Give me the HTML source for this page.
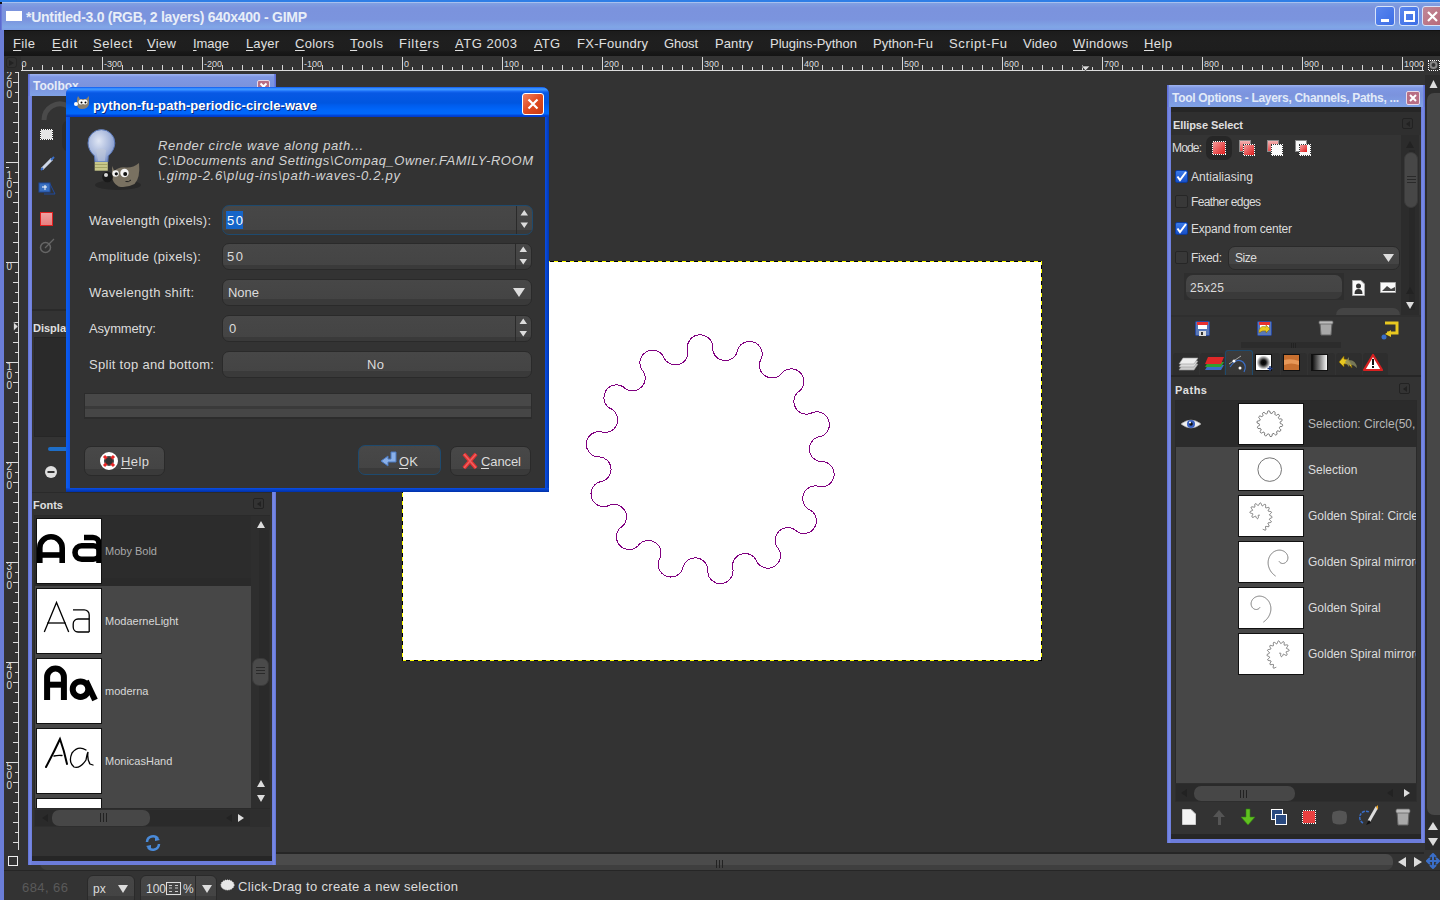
<!DOCTYPE html>
<html><head><meta charset="utf-8"><style>
html,body{margin:0;padding:0;}
body{width:1440px;height:900px;overflow:hidden;background:#333333;position:relative;font-family:"Liberation Sans", sans-serif;}
div{position:absolute;}
svg{position:absolute;}
</style></head><body>
<div style="left:0px;top:0px;width:1440px;height:2px;background:#2f7ee6"></div>
<div style="left:0px;top:2px;width:1440px;height:1px;background:#a8c0ee"></div>
<div style="left:0px;top:3px;width:1440px;height:27px;background:linear-gradient(#82a0e2 0px,#7b93dd 5px,#7b94de 17px,#80a6e6 24px,#7f9ee6 27px)"></div>
<div style="left:0px;top:2px;width:2px;height:2px;background:#111"></div>
<div style="left:0px;top:4px;width:1px;height:26px;background:#5a6ad0"></div>
<div style="left:1px;top:4px;width:1px;height:26px;background:#6a7ad8"></div>
<div style="left:6px;top:11px;width:16px;height:10px;background:#ffffff"></div>
<div id="t0" style="left:26px;top:10px;font-size:14px;line-height:14px;color:#e8eef8;white-space:pre;font-weight:bold;letter-spacing:-0.269px;">*Untitled-3.0 (RGB, 2 layers) 640x400 - GIMP</div>
<div style="left:1375px;top:6px;width:20px;height:20px;background:linear-gradient(135deg,#5a86ee,#3c6ee6);border:1px solid #d8e4fa;border-radius:3px;box-sizing:border-box"><div style="left:5px;top:12px;width:8px;height:3px;background:#fff"></div></div>
<div style="left:1399px;top:6px;width:20px;height:20px;background:linear-gradient(135deg,#5a86ee,#3c6ee6);border:1px solid #d8e4fa;border-radius:3px;box-sizing:border-box"><div style="left:4px;top:4px;width:9px;height:9px;border:2px solid #fff;border-top-width:3px;box-sizing:border-box;width:11px;height:11px"></div></div>
<div style="left:1422px;top:6px;width:22px;height:20px;background:linear-gradient(135deg,#c08898,#b86878);border:1px solid #d8e4fa;border-radius:3px;box-sizing:border-box"><svg width="20" height="20" style="position:absolute;left:0;top:0"><path d="M5 5 L14 14 M14 5 L5 14" stroke="#fff" stroke-width="2.2"/></svg></div>
<div style="left:0px;top:30px;width:4px;height:870px;background:#6b7ed8"></div>
<div style="left:4px;top:30px;width:1436px;height:1px;background:#111"></div>
<div style="left:4px;top:31px;width:1436px;height:25px;background:linear-gradient(#1c1c1c 0px,#1f1f1f 7px,#1e1e1e 19px,#181818 21px,#141414 25px)"></div>
<div id="t1" style="left:13px;top:37px;font-size:13px;line-height:13px;color:#e0e0e0;white-space:pre;letter-spacing:0.349px;"><span style="text-decoration:underline;text-underline-offset:1.5px">F</span>ile</div>
<div id="t2" style="left:52px;top:37px;font-size:13px;line-height:13px;color:#e0e0e0;white-space:pre;letter-spacing:0.865px;"><span style="text-decoration:underline;text-underline-offset:1.5px">E</span>dit</div>
<div id="t3" style="left:93px;top:37px;font-size:13px;line-height:13px;color:#e0e0e0;white-space:pre;letter-spacing:0.572px;"><span style="text-decoration:underline;text-underline-offset:1.5px">S</span>elect</div>
<div id="t4" style="left:147px;top:37px;font-size:13px;line-height:13px;color:#e0e0e0;white-space:pre;letter-spacing:0.349px;"><span style="text-decoration:underline;text-underline-offset:1.5px">V</span>iew</div>
<div id="t5" style="left:193px;top:37px;font-size:13px;line-height:13px;color:#e0e0e0;white-space:pre;letter-spacing:-0.035px;"><span style="text-decoration:underline;text-underline-offset:1.5px">I</span>mage</div>
<div id="t6" style="left:246px;top:37px;font-size:13px;line-height:13px;color:#e0e0e0;white-space:pre;letter-spacing:0.117px;"><span style="text-decoration:underline;text-underline-offset:1.5px">L</span>ayer</div>
<div id="t7" style="left:295px;top:37px;font-size:13px;line-height:13px;color:#e0e0e0;white-space:pre;letter-spacing:0.284px;"><span style="text-decoration:underline;text-underline-offset:1.5px">C</span>olors</div>
<div id="t8" style="left:350px;top:37px;font-size:13px;line-height:13px;color:#e0e0e0;white-space:pre;letter-spacing:0.660px;"><span style="text-decoration:underline;text-underline-offset:1.5px">T</span>ools</div>
<div id="t9" style="left:399px;top:37px;font-size:13px;line-height:13px;color:#e0e0e0;white-space:pre;letter-spacing:0.768px;">Filt<span style="text-decoration:underline;text-underline-offset:1.5px">e</span>rs</div>
<div id="t10" style="left:455px;top:37px;font-size:13px;line-height:13px;color:#e0e0e0;white-space:pre;letter-spacing:0.529px;"><span style="text-decoration:underline;text-underline-offset:1.5px">A</span>TG 2003</div>
<div id="t11" style="left:534px;top:37px;font-size:13px;line-height:13px;color:#e0e0e0;white-space:pre;letter-spacing:0.117px;"><span style="text-decoration:underline;text-underline-offset:1.5px">A</span>TG</div>
<div id="t12" style="left:577px;top:37px;font-size:13px;line-height:13px;color:#e0e0e0;white-space:pre;letter-spacing:0.262px;">FX-Foundry</div>
<div id="t13" style="left:664px;top:37px;font-size:13px;line-height:13px;color:#e0e0e0;white-space:pre;letter-spacing:-0.172px;">Ghost</div>
<div id="t14" style="left:715px;top:37px;font-size:13px;line-height:13px;color:#e0e0e0;white-space:pre;letter-spacing:0.084px;">Pantry</div>
<div id="t15" style="left:770px;top:37px;font-size:13px;line-height:13px;color:#e0e0e0;white-space:pre;letter-spacing:-0.035px;">Plugins-Python</div>
<div id="t16" style="left:873px;top:37px;font-size:13px;line-height:13px;color:#e0e0e0;white-space:pre;letter-spacing:0.002px;">Python-Fu</div>
<div id="t17" style="left:949px;top:37px;font-size:13px;line-height:13px;color:#e0e0e0;white-space:pre;letter-spacing:0.658px;">Script-Fu</div>
<div id="t18" style="left:1023px;top:37px;font-size:13px;line-height:13px;color:#e0e0e0;white-space:pre;letter-spacing:0.246px;">Video</div>
<div id="t19" style="left:1073px;top:37px;font-size:13px;line-height:13px;color:#e0e0e0;white-space:pre;letter-spacing:0.375px;"><span style="text-decoration:underline;text-underline-offset:1.5px">W</span>indows</div>
<div id="t20" style="left:1144px;top:37px;font-size:13px;line-height:13px;color:#e0e0e0;white-space:pre;letter-spacing:0.417px;"><span style="text-decoration:underline;text-underline-offset:1.5px">H</span>elp</div>
<div style="left:4px;top:56px;width:17px;height:16px;background:#2e2e2e"></div>
<div style="left:6px;top:57px;width:11px;height:11px;border:1px solid #262626;border-radius:3px;box-sizing:border-box;background:#313131"></div>
<svg style="position:absolute;left:8px;top:59px" width="9" height="9"><path d="M1 1 L6 4 L1 7 Z" fill="#222"/></svg>
<div style="left:21px;top:56px;width:1403px;height:16px;background:#333;overflow:hidden"></div>
<svg style="position:absolute;left:0;top:0" width="1440" height="900"><path d="M22.5 65 V70 M32.5 67 V70 M42.5 65 V70 M52.5 67 V70 M62.5 65 V70 M72.5 67 V70 M82.5 65 V70 M92.5 67 V70 M102.5 57 V70 M112.5 67 V70 M122.5 65 V70 M132.5 67 V70 M142.5 65 V70 M152.5 67 V70 M162.5 65 V70 M172.5 67 V70 M182.5 65 V70 M192.5 67 V70 M202.5 57 V70 M212.5 67 V70 M222.5 65 V70 M232.5 67 V70 M242.5 65 V70 M252.5 67 V70 M262.5 65 V70 M272.5 67 V70 M282.5 65 V70 M292.5 67 V70 M302.5 57 V70 M312.5 67 V70 M322.5 65 V70 M332.5 67 V70 M342.5 65 V70 M352.5 67 V70 M362.5 65 V70 M372.5 67 V70 M382.5 65 V70 M392.5 67 V70 M402.5 57 V70 M412.5 67 V70 M422.5 65 V70 M432.5 67 V70 M442.5 65 V70 M452.5 67 V70 M462.5 65 V70 M472.5 67 V70 M482.5 65 V70 M492.5 67 V70 M502.5 57 V70 M512.5 67 V70 M522.5 65 V70 M532.5 67 V70 M542.5 65 V70 M552.5 67 V70 M562.5 65 V70 M572.5 67 V70 M582.5 65 V70 M592.5 67 V70 M602.5 57 V70 M612.5 67 V70 M622.5 65 V70 M632.5 67 V70 M642.5 65 V70 M652.5 67 V70 M662.5 65 V70 M672.5 67 V70 M682.5 65 V70 M692.5 67 V70 M702.5 57 V70 M712.5 67 V70 M722.5 65 V70 M732.5 67 V70 M742.5 65 V70 M752.5 67 V70 M762.5 65 V70 M772.5 67 V70 M782.5 65 V70 M792.5 67 V70 M802.5 57 V70 M812.5 67 V70 M822.5 65 V70 M832.5 67 V70 M842.5 65 V70 M852.5 67 V70 M862.5 65 V70 M872.5 67 V70 M882.5 65 V70 M892.5 67 V70 M902.5 57 V70 M912.5 67 V70 M922.5 65 V70 M932.5 67 V70 M942.5 65 V70 M952.5 67 V70 M962.5 65 V70 M972.5 67 V70 M982.5 65 V70 M992.5 67 V70 M1002.5 57 V70 M1012.5 67 V70 M1022.5 65 V70 M1032.5 67 V70 M1042.5 65 V70 M1052.5 67 V70 M1062.5 65 V70 M1072.5 67 V70 M1082.5 65 V70 M1092.5 67 V70 M1102.5 57 V70 M1112.5 67 V70 M1122.5 65 V70 M1132.5 67 V70 M1142.5 65 V70 M1152.5 67 V70 M1162.5 65 V70 M1172.5 67 V70 M1182.5 65 V70 M1192.5 67 V70 M1202.5 57 V70 M1212.5 67 V70 M1222.5 65 V70 M1232.5 67 V70 M1242.5 65 V70 M1252.5 67 V70 M1262.5 65 V70 M1272.5 67 V70 M1282.5 65 V70 M1292.5 67 V70 M1302.5 57 V70 M1312.5 67 V70 M1322.5 65 V70 M1332.5 67 V70 M1342.5 65 V70 M1352.5 67 V70 M1362.5 65 V70 M1372.5 67 V70 M1382.5 65 V70 M1392.5 67 V70 M1402.5 57 V70 M1412.5 67 V70 M1422.5 65 V70" stroke="#d8d8d8" stroke-width="1"/><path d="M21 70.5 H1424" stroke="#dcdcdc" stroke-width="1"/></svg>
<div style="left:21px;top:56px;width:1403px;height:16px;overflow:hidden">
<div style="left:83px;top:3.5px;font-size:9px;line-height:9px;color:#dcdcdc;white-space:pre">-300</div>
<div style="left:183px;top:3.5px;font-size:9px;line-height:9px;color:#dcdcdc;white-space:pre">-200</div>
<div style="left:283px;top:3.5px;font-size:9px;line-height:9px;color:#dcdcdc;white-space:pre">-100</div>
<div style="left:383px;top:3.5px;font-size:9px;line-height:9px;color:#dcdcdc;white-space:pre">0</div>
<div style="left:483px;top:3.5px;font-size:9px;line-height:9px;color:#dcdcdc;white-space:pre">100</div>
<div style="left:583px;top:3.5px;font-size:9px;line-height:9px;color:#dcdcdc;white-space:pre">200</div>
<div style="left:683px;top:3.5px;font-size:9px;line-height:9px;color:#dcdcdc;white-space:pre">300</div>
<div style="left:783px;top:3.5px;font-size:9px;line-height:9px;color:#dcdcdc;white-space:pre">400</div>
<div style="left:883px;top:3.5px;font-size:9px;line-height:9px;color:#dcdcdc;white-space:pre">500</div>
<div style="left:983px;top:3.5px;font-size:9px;line-height:9px;color:#dcdcdc;white-space:pre">600</div>
<div style="left:1083px;top:3.5px;font-size:9px;line-height:9px;color:#dcdcdc;white-space:pre">700</div>
<div style="left:1183px;top:3.5px;font-size:9px;line-height:9px;color:#dcdcdc;white-space:pre">800</div>
<div style="left:1283px;top:3.5px;font-size:9px;line-height:9px;color:#dcdcdc;white-space:pre">900</div>
<div style="left:1383px;top:3.5px;font-size:9px;line-height:9px;color:#dcdcdc;white-space:pre">1000</div>
<div style="left:0.6px;top:3.5px;font-size:9px;line-height:9px;color:#dcdcdc;white-space:pre">0</div>
</div>
<div style="left:4px;top:72px;width:17px;height:778px;background:#333"></div>
<svg style="position:absolute;left:0;top:0" width="40" height="900"><path d="M15 72.5 H18 M13 82.5 H18 M15 92.5 H18 M13 102.5 H18 M15 112.5 H18 M13 122.5 H18 M15 132.5 H18 M13 142.5 H18 M15 152.5 H18 M6 162.5 H18 M15 172.5 H18 M13 182.5 H18 M15 192.5 H18 M13 202.5 H18 M15 212.5 H18 M13 222.5 H18 M15 232.5 H18 M13 242.5 H18 M15 252.5 H18 M6 262.5 H18 M15 272.5 H18 M13 282.5 H18 M15 292.5 H18 M13 302.5 H18 M15 312.5 H18 M13 322.5 H18 M15 332.5 H18 M13 342.5 H18 M15 352.5 H18 M6 362.5 H18 M15 372.5 H18 M13 382.5 H18 M15 392.5 H18 M13 402.5 H18 M15 412.5 H18 M13 422.5 H18 M15 432.5 H18 M13 442.5 H18 M15 452.5 H18 M6 462.5 H18 M15 472.5 H18 M13 482.5 H18 M15 492.5 H18 M13 502.5 H18 M15 512.5 H18 M13 522.5 H18 M15 532.5 H18 M13 542.5 H18 M15 552.5 H18 M6 562.5 H18 M15 572.5 H18 M13 582.5 H18 M15 592.5 H18 M13 602.5 H18 M15 612.5 H18 M13 622.5 H18 M15 632.5 H18 M13 642.5 H18 M15 652.5 H18 M6 662.5 H18 M15 672.5 H18 M13 682.5 H18 M15 692.5 H18 M13 702.5 H18 M15 712.5 H18 M13 722.5 H18 M15 732.5 H18 M13 742.5 H18 M15 752.5 H18 M6 762.5 H18 M15 772.5 H18 M13 782.5 H18 M15 792.5 H18 M13 802.5 H18 M15 812.5 H18 M13 822.5 H18 M15 832.5 H18 M13 842.5 H18" stroke="#dcdcdc" stroke-width="1"/><path d="M18.5 72 V850" stroke="#dcdcdc" stroke-width="1"/></svg>
<div style="left:4px;top:72px;width:17px;height:778px;overflow:hidden">
<div style="left:2px;top:-5px;width:3px;height:1px;background:#dcdcdc"></div>
<div style="left:2.6px;top:-1.37px;font-size:10px;line-height:10px;color:#dcdcdc">2</div>
<div style="left:2.6px;top:8.13px;font-size:10px;line-height:10px;color:#dcdcdc">0</div>
<div style="left:2.6px;top:17.63px;font-size:10px;line-height:10px;color:#dcdcdc">0</div>
<div style="left:2px;top:95px;width:3px;height:1px;background:#dcdcdc"></div>
<div style="left:2.6px;top:98.63px;font-size:10px;line-height:10px;color:#dcdcdc">1</div>
<div style="left:2.6px;top:108.13px;font-size:10px;line-height:10px;color:#dcdcdc">0</div>
<div style="left:2.6px;top:117.63px;font-size:10px;line-height:10px;color:#dcdcdc">0</div>
<div style="left:2.6px;top:189.63px;font-size:10px;line-height:10px;color:#dcdcdc">0</div>
<div style="left:2.6px;top:289.63px;font-size:10px;line-height:10px;color:#dcdcdc">1</div>
<div style="left:2.6px;top:299.13px;font-size:10px;line-height:10px;color:#dcdcdc">0</div>
<div style="left:2.6px;top:308.63px;font-size:10px;line-height:10px;color:#dcdcdc">0</div>
<div style="left:2.6px;top:389.63px;font-size:10px;line-height:10px;color:#dcdcdc">2</div>
<div style="left:2.6px;top:399.13px;font-size:10px;line-height:10px;color:#dcdcdc">0</div>
<div style="left:2.6px;top:408.63px;font-size:10px;line-height:10px;color:#dcdcdc">0</div>
<div style="left:2.6px;top:489.63px;font-size:10px;line-height:10px;color:#dcdcdc">3</div>
<div style="left:2.6px;top:499.13px;font-size:10px;line-height:10px;color:#dcdcdc">0</div>
<div style="left:2.6px;top:508.63px;font-size:10px;line-height:10px;color:#dcdcdc">0</div>
<div style="left:2.6px;top:589.63px;font-size:10px;line-height:10px;color:#dcdcdc">4</div>
<div style="left:2.6px;top:599.13px;font-size:10px;line-height:10px;color:#dcdcdc">0</div>
<div style="left:2.6px;top:608.63px;font-size:10px;line-height:10px;color:#dcdcdc">0</div>
<div style="left:2.6px;top:689.63px;font-size:10px;line-height:10px;color:#dcdcdc">5</div>
<div style="left:2.6px;top:699.13px;font-size:10px;line-height:10px;color:#dcdcdc">0</div>
<div style="left:2.6px;top:708.63px;font-size:10px;line-height:10px;color:#dcdcdc">0</div>
</div>
<svg style="position:absolute;left:1079px;top:64px" width="14" height="8"><path d="M2.5 2 L11 2 L6.5 6.8Z" fill="#dcdcdc" stroke="#222" stroke-width="0.6"/></svg>
<svg style="position:absolute;left:11px;top:320px" width="9" height="14"><path d="M2.5 2 L7.2 6.5 L2.5 11Z" fill="#dcdcdc" stroke="#222" stroke-width="0.6"/></svg>
<div style="left:402px;top:261px;width:640px;height:400px;background:#fff"></div>
<div style="left:402px;top:261px;width:640px;height:1px;background:repeating-linear-gradient(90deg,#ffff00 0 4px,#000 4px 8px)"></div>
<div style="left:402px;top:660px;width:640px;height:1px;background:repeating-linear-gradient(90deg,#ffff00 0 4px,#000 4px 8px)"></div>
<div style="left:402px;top:261px;width:1px;height:400px;background:repeating-linear-gradient(180deg,#ffff00 0 4px,#000 4px 8px)"></div>
<div style="left:1041px;top:261px;width:1px;height:400px;background:repeating-linear-gradient(180deg,#ffff00 0 4px,#000 4px 8px)"></div>
<svg style="position:absolute;left:0;top:0" width="1440" height="900"><path d="M687.42 348.52 A12.65 12.65 0 0 1 712.62 346.23 A12.65 12.65 0 0 0 737.70 349.60 A12.65 12.65 0 0 1 761.40 358.47 A12.65 12.65 0 0 0 782.53 372.38 A12.65 12.65 0 0 1 800.04 390.66 A12.65 12.65 0 0 0 813.04 412.37 A12.65 12.65 0 0 1 820.88 436.42 A12.65 12.65 0 0 0 823.17 461.62 A12.65 12.65 0 0 1 819.80 486.70 A12.65 12.65 0 0 0 810.93 510.40 A12.65 12.65 0 0 1 797.02 531.53 A12.65 12.65 0 0 0 778.74 549.04 A12.65 12.65 0 0 1 757.03 562.04 A12.65 12.65 0 0 0 732.98 569.88 A12.65 12.65 0 0 1 707.78 572.17 A12.65 12.65 0 0 0 682.70 568.80 A12.65 12.65 0 0 1 659.00 559.93 A12.65 12.65 0 0 0 637.87 546.02 A12.65 12.65 0 0 1 620.36 527.74 A12.65 12.65 0 0 0 607.36 506.03 A12.65 12.65 0 0 1 599.52 481.98 A12.65 12.65 0 0 0 597.23 456.78 A12.65 12.65 0 0 1 600.60 431.70 A12.65 12.65 0 0 0 609.47 408.00 A12.65 12.65 0 0 1 623.38 386.87 A12.65 12.65 0 0 0 641.66 369.36 A12.65 12.65 0 0 1 663.37 356.36 A12.65 12.65 0 0 0 687.42 348.52 Z" fill="none" stroke="#800080" stroke-width="1" shape-rendering="crispEdges"/></svg>
<div style="left:1424px;top:56px;width:16px;height:16px;background:#333"></div>
<svg style="position:absolute;left:1427px;top:59px" width="13" height="12"><rect x="1" y="1" width="11" height="10" fill="none" stroke="#fff" stroke-dasharray="1 1" shape-rendering="crispEdges"/><circle cx="6.5" cy="6" r="3" fill="none" stroke="#888" stroke-width="2"/></svg>
<div style="left:1425px;top:72px;width:15px;height:780px;background:#333"></div>
<div style="left:1425px;top:75px;width:15px;height:775px;background:#2c2c2c"></div>
<svg style="position:absolute;left:1427px;top:78px" width="13" height="12"><path d="M2.5 10 L6.5 2 L10.5 10Z" fill="#ddd"/></svg>
<div style="left:1427px;top:93px;width:13px;height:722px;background:#474747;border-radius:7px 0 0 7px"></div>
<svg style="position:absolute;left:1426px;top:820px" width="14" height="30"><path d="M2 10 L7 2 L12 10Z M2 18 L12 18 L7 26Z" fill="#ddd"/></svg>
<div style="left:40px;top:852px;width:1384px;height:2px;background:#262626"></div>
<div style="left:40px;top:854px;width:1353px;height:16px;background:linear-gradient(#4b4b4b 0,#4b4b4b 11px,#3f3f3f 11px);border-radius:7px"></div>
<div style="left:4px;top:870px;width:1436px;height:1px;background:#262626"></div>
<svg style="position:absolute;left:1396px;top:855px" width="30" height="14"><path d="M10 2 L2 7 L10 12Z M18 2 L26 7 L18 12Z" fill="#ddd"/></svg>
<svg style="position:absolute;left:1426px;top:853px" width="14" height="16"><path d="M7 1 L7 15 M1 8 L13 8 M4 4 L7 1 L10 4 M4 12 L7 15 L10 12 M4 5 L1 8 L4 11 M10 5 L13 8 L10 11" stroke="#3a6ec8" stroke-width="2" fill="none"/></svg>
<div style="left:716px;top:860px;width:1px;height:8px;background:#222"></div>
<div style="left:719px;top:860px;width:1px;height:8px;background:#222"></div>
<div style="left:722px;top:860px;width:1px;height:8px;background:#222"></div>
<svg style="position:absolute;left:6px;top:854px" width="14" height="14"><rect x="2.5" y="2.5" width="9" height="9" fill="none" stroke="#eee" stroke-width="1"/></svg>
<div id="t21" style="left:22px;top:881px;font-size:13px;line-height:13px;color:#5a5a5a;white-space:pre;letter-spacing:0.438px;">684, 66</div>
<div style="left:87px;top:875px;width:48px;height:30px;background:linear-gradient(#464646 0,#444 70%,#3a3a3a 70%);border-radius:6px;border:1px solid #2a2a2a;box-sizing:border-box"></div>
<div id="t22" style="left:93px;top:883px;font-size:12px;line-height:12px;color:#dcdcdc;white-space:pre;">px</div>
<svg style="position:absolute;left:117px;top:884px" width="12" height="10"><path d="M1 1 L11 1 L6 9Z" fill="#ddd"/></svg>
<div style="left:140px;top:875px;width:77px;height:30px;background:linear-gradient(#464646 0,#444 70%,#3a3a3a 70%);border-radius:6px;border:1px solid #2a2a2a;box-sizing:border-box"></div>
<div style="left:195px;top:876px;width:1px;height:24px;background:#2a2a2a"></div>
<div id="t23" style="left:146px;top:883px;font-size:12px;line-height:12px;color:#dcdcdc;white-space:pre;">100</div>
<div style="left:166px;top:882px;width:15px;height:13px;border:1px solid #ddd;box-sizing:border-box"></div>
<svg style="position:absolute;left:166px;top:882px" width="15" height="13"><path d="M3 3.5 H6 M3 6 H6 M9 3.5 H12 M3 9.5 H6 M9 9.5 H12 M9 6 H12" stroke="#ccc" stroke-width="1.2"/></svg>
<div id="t24" style="left:183px;top:883px;font-size:12px;line-height:12px;color:#dcdcdc;white-space:pre;">%</div>
<svg style="position:absolute;left:201px;top:884px" width="12" height="10"><path d="M1 1 L11 1 L6 9Z" fill="#ddd"/></svg>
<svg style="position:absolute;left:220px;top:879px" width="16" height="13"><ellipse cx="7.5" cy="6" rx="6.5" ry="5" fill="#e8e8e8" stroke="#fff" stroke-dasharray="1 1"/></svg>
<div id="t25" style="left:238px;top:880px;font-size:13px;line-height:13px;color:#dcdcdc;white-space:pre;letter-spacing:0.340px;">Click-Drag to create a new selection</div>
<div style="left:28px;top:74px;width:248px;height:791px;background:linear-gradient(90deg,#5f70d6 0,#7a8ce6 2px,#6c7cda 4px,#6c7cda 244px,#7a8ce6 246px,#5f70d6 248px)"></div>
<div style="left:28px;top:74px;width:248px;height:22px;background:linear-gradient(#9fb4f0 0,#7f98e4 3px,#7b93dd 12px,#80a2e6 22px)"></div>
<div style="left:28px;top:74px;width:2px;height:22px;background:linear-gradient(90deg,#5a68d6,#7288e2)"></div>
<div style="left:274px;top:74px;width:2px;height:22px;background:linear-gradient(90deg,#7288e2,#5a68d6)"></div>
<div id="t26" style="left:33px;top:80px;font-size:12px;line-height:12px;color:#e6ecf8;white-space:pre;font-weight:bold;">Toolbox</div>
<div style="left:257px;top:80px;width:13px;height:13px;background:#b86e84;border:1px solid #e8dce8;border-radius:2px;box-sizing:border-box"><svg width="11" height="11" style="position:absolute;left:0;top:0"><path d="M2.5 2.5 L8.5 8.5 M8.5 2.5 L2.5 8.5" stroke="#fff" stroke-width="2"/></svg></div>
<div style="left:32px;top:96px;width:240px;height:765px;background:#333"></div>
<svg style="position:absolute;left:32px;top:96px" width="40" height="40"><path d="M12 24 A 16 16 0 0 1 36 10" stroke="#4a4a4a" stroke-width="5" fill="none"/></svg>
<div style="left:62px;top:120px;width:8px;height:32px;background:#2c2c2c;border-radius:8px 0 0 8px"></div>
<svg style="position:absolute;left:38px;top:128px" width="18" height="15"><rect x="2.5" y="1.5" width="12" height="10" fill="#e4e4e4" stroke="#333"/><rect x="2.5" y="1.5" width="12" height="10" fill="none" stroke="#fff" stroke-dasharray="1 1" shape-rendering="crispEdges"/></svg>
<svg style="position:absolute;left:40px;top:155px" width="16" height="16"><path d="M2 14 L12 4" stroke="#cfd8e8" stroke-width="3"/><path d="M11 5 L14 2" stroke="#3a6ec8" stroke-width="2"/><path d="M1 15 L3 13" stroke="#3a6ec8" stroke-width="2"/></svg>
<svg style="position:absolute;left:38px;top:181px" width="18" height="16"><rect x="1" y="2" width="11" height="9" fill="#3a70c0" stroke="#1e4aa0"/><path d="M12 3 L17 13 L6 13" stroke="#1e4aa0" fill="none"/><path d="M4 6 H9 M7 4 V9" stroke="#fff"/></svg>
<div style="left:40px;top:212px;width:13px;height:14px;background:linear-gradient(#f0a0a0,#e88080);border:1px solid #e02020;box-sizing:border-box"></div>
<svg style="position:absolute;left:39px;top:238px" width="16" height="16"><circle cx="6.5" cy="9.5" r="5" stroke="#666" stroke-width="1.5" fill="none"/><path d="M6 10 L15 1" stroke="#666" stroke-width="1.2"/></svg>
<div style="left:32px;top:309px;width:240px;height:2px;background:#2a2a2a"></div>
<div id="t27" style="left:33px;top:323px;font-size:11px;line-height:11px;color:#e0e0e0;white-space:pre;font-weight:bold;">Display</div>
<div style="left:34px;top:337px;width:240px;height:100px;background:#2a2a2a;border:1px solid #262626;box-sizing:border-box"></div>
<div style="left:48px;top:447px;width:30px;height:4px;background:#1e6ec8;border-radius:2px"></div>
<svg style="position:absolute;left:44px;top:465px" width="14" height="14"><circle cx="7" cy="7" r="6" fill="#e0e0e0"/><path d="M3.5 7 H10.5" stroke="#333" stroke-width="2"/></svg>
<div style="left:32px;top:492px;width:240px;height:1px;background:#2a2a2a"></div>
<div id="t28" style="left:33px;top:500px;font-size:11px;line-height:11px;color:#e0e0e0;white-space:pre;font-weight:bold;">Fonts</div>
<div style="left:253px;top:498px;width:11px;height:11px;border:1px solid #222;border-radius:2px;box-sizing:border-box"></div>
<svg style="position:absolute;left:255px;top:500px" width="8" height="8"><path d="M6 1 L2 4 L6 7Z" fill="#222"/></svg>
<div style="left:34px;top:515px;width:236px;height:294px;background:#2a2a2a"></div>
<div style="left:35px;top:516px;width:216px;height:292px;background:#474747;overflow:hidden"></div>
<div style="left:35px;top:516px;width:216px;height:62px;background:#2c2c2c"></div>
<div style="left:35px;top:578px;width:216px;height:8px;background:#2a2a2a"></div>
<div style="left:251px;top:516px;width:19px;height:292px;background:#2e2e2e"></div>
<div style="left:259px;top:530px;width:10px;height:250px;background:#2a2a2a"></div>
<svg style="position:absolute;left:254px;top:518px" width="14" height="290"><path d="M3 10 L7 3 L11 10Z M3 269 L7 262 L11 269Z M3 277 L11 277 L7 284Z" fill="#ddd"/></svg>
<div style="left:252px;top:658px;width:17px;height:28px;background:#4a4a4a;border-radius:7px;border:1px solid #3a3a3a;box-sizing:border-box"></div>
<div style="left:256px;top:667px;width:9px;height:1px;background:#2a2a2a"></div>
<div style="left:256px;top:670px;width:9px;height:1px;background:#2a2a2a"></div>
<div style="left:256px;top:673px;width:9px;height:1px;background:#2a2a2a"></div>
<div style="left:35px;top:516px;width:216px;height:292px;overflow:hidden">
<div style="left:1px;top:2px;width:66px;height:66px;background:#fff;box-sizing:border-box;border:1px solid #111"></div>
<div style="left:70px;top:29px;font-size:11px;line-height:12px;color:#a8a8a8;white-space:pre">Moby Bold</div>
<div style="left:1px;top:72px;width:66px;height:66px;background:#fff;box-sizing:border-box;border:1px solid #111"></div>
<div style="left:70px;top:99px;font-size:11px;line-height:12px;color:#d8d8d8;white-space:pre">ModaerneLight</div>
<div style="left:1px;top:142px;width:66px;height:66px;background:#fff;box-sizing:border-box;border:1px solid #111"></div>
<div style="left:70px;top:169px;font-size:11px;line-height:12px;color:#d8d8d8;white-space:pre">moderna</div>
<div style="left:1px;top:212px;width:66px;height:66px;background:#fff;box-sizing:border-box;border:1px solid #111"></div>
<div style="left:70px;top:239px;font-size:11px;line-height:12px;color:#d8d8d8;white-space:pre">MonicasHand</div>
<div style="left:1px;top:282px;width:66px;height:66px;background:#fff;box-sizing:border-box;border:1px solid #111"></div>
</div>
<svg style="position:absolute;left:0;top:0" width="110" height="810">
<defs><clipPath id="fc1"><rect x="36" y="519" width="65" height="64"/></clipPath></defs>
<g clip-path="url(#fc1)" fill="none" stroke="#000" stroke-width="5.6">
<path d="M39.8 563 V548 A11.2 11.2 0 0 1 62.2 548 V563"/><path d="M39.8 555 H62.2"/>
<path d="M84 537.5 H93 A6 6 0 0 1 99 543.5 V563"/><rect x="75" y="545.8" width="25" height="13.4" rx="6.7"/>
</g>
<g fill="none" stroke="#000" stroke-width="1.3">
<path d="M44.3 632 L56.5 602.5 L68.7 632"/><path d="M47.3 623 H65.6"/>
<path d="M73 609.8 H84 A5 5 0 0 1 89.2 615 V632"/><path d="M89.2 619 H78 A5 5 0 0 0 73.2 624 V627 A5 5 0 0 0 78 632 H89.2"/>
</g>
<g fill="none" stroke="#000" stroke-width="6">
<path d="M47.1 700 V677 A8.4 8.4 0 0 1 63.9 677 V700"/><path d="M47.1 684.7 H63.9"/>
<circle cx="80.5" cy="689.2" r="7.8"/><path d="M86 681 L95 700"/>
</g>
<g fill="none" stroke="#000" stroke-width="1.3" stroke-linecap="round">
<path d="M46 767 Q54 752 60 739 Q64 750 67 764" stroke-width="2"/><path d="M54 756 Q58 755 62 755.5"/>
<path d="M86 750 Q78 745 72 753 Q68 762 74 767 Q80 769 86 760 Q87 754 88 752 Q87 760 90 764 L93 765"/>
</g>
</svg>
<div style="left:34px;top:809px;width:236px;height:18px;background:#2e2e2e"></div>
<div style="left:35px;top:810px;width:215px;height:16px;background:#2a2a2a"></div>
<div style="left:52px;top:810px;width:98px;height:16px;background:#474747;border-radius:7px"></div>
<div style="left:100px;top:813px;width:1px;height:9px;background:#222"></div>
<div style="left:103px;top:813px;width:1px;height:9px;background:#222"></div>
<div style="left:106px;top:813px;width:1px;height:9px;background:#222"></div>
<svg style="position:absolute;left:38px;top:812px" width="210" height="12"><path d="M200 2 L206 6 L200 10Z" fill="#ddd"/><path d="M10 2 L4 6 L10 10Z M194 2 L188 6 L194 10Z" fill="#222"/></svg>
<div style="left:32px;top:827px;width:240px;height:30px;background:#333"></div>
<svg style="position:absolute;left:144px;top:834px" width="18" height="18"><path d="M3 8 A6 6 0 0 1 14 5" stroke="#4a8ad8" stroke-width="2.5" fill="none"/><path d="M15 10 A6 6 0 0 1 4 13" stroke="#4a8ad8" stroke-width="2.5" fill="none"/><path d="M11 2 L16 6 L11 7Z M7 16 L2 12 L7 11Z" fill="#4a8ad8"/></svg>
<div style="left:32px;top:856px;width:240px;height:5px;background:#262626"></div>
<div style="left:66px;top:87px;width:483px;height:405px;background:#0846dc;border-radius:7px 7px 0 0"></div>
<div style="left:66px;top:87px;width:483px;height:30px;background:linear-gradient(#0a4ee8 0,#2a84ff 1px,#3d95ff 2px,#3a92ff 3px,#1c70f8 4px,#0858e4 6px,#0056e0 16px,#005cec 18px,#0066fa 23px,#0068fc 27px,#0048dc 28px,#0038c8 30px);border-radius:7px 7px 0 0"></div>
<div style="left:66px;top:117px;width:4px;height:375px;background:linear-gradient(90deg,#0a5ef0,#0a4ee4)"></div>
<div style="left:545px;top:117px;width:4px;height:375px;background:linear-gradient(90deg,#0a4ee4,#0036b0)"></div>
<div style="left:66px;top:488px;width:483px;height:4px;background:linear-gradient(#0a4ee4,#0030a8)"></div>
<svg style="position:absolute;left:73px;top:95px" width="18" height="15"><path d="M4 4 L5 1 L7 4 L13 4 L16 1 L16 9 Q15 14 9 14 Q4 14 4 9Z" fill="#8a8070"/><circle cx="8" cy="7" r="2.5" fill="#fff"/><circle cx="12" cy="7" r="2.5" fill="#fff"/><circle cx="8.5" cy="7.5" r="1" fill="#000"/><circle cx="12.5" cy="7.5" r="1" fill="#000"/><circle cx="3" cy="9" r="2" fill="#fff"/></svg>
<div id="t29" style="left:93px;top:99px;font-size:13px;line-height:13px;color:#ffffff;white-space:pre;font-weight:bold;letter-spacing:0.087px;text-shadow:1px 1px 0 #0a2a80;">python-fu-path-periodic-circle-wave</div>
<div style="left:522px;top:93px;width:22px;height:22px;background:linear-gradient(135deg,#f08060,#e04a20 50%,#c83a10);border:1px solid #fff;border-radius:3px;box-sizing:border-box"><svg width="20" height="20" style="position:absolute;left:0;top:0"><path d="M5.5 5.5 L14.5 14.5 M14.5 5.5 L5.5 14.5" stroke="#fff" stroke-width="2.2"/></svg></div>
<div style="left:70px;top:117px;width:475px;height:371px;background:#333"></div>
<svg style="position:absolute;left:84px;top:128px" width="64" height="64">
<defs><radialGradient id="bg1" cx="0.4" cy="0.35" r="0.7"><stop offset="0" stop-color="#dfe6f4"/><stop offset="0.6" stop-color="#a8b8dc"/><stop offset="1" stop-color="#7890c8"/></radialGradient></defs>
<ellipse cx="34" cy="57" rx="23" ry="5" fill="#282828"/>
<path d="M10.5 28 Q4 22 4 15 A13.4 13.4 0 1 1 30.8 15 Q30.8 22 24.2 28 L23.8 34 L11 34 Z" fill="url(#bg1)" stroke="#5a78b8" stroke-width="1"/>
<path d="M12 22 Q17 19 22 22 L21 33 H14Z" fill="#c0c8d8" opacity="0.6"/>
<rect x="10.7" y="34" width="13.1" height="8.7" fill="#c8c88a"/><path d="M11 36.5 H23.5 M11 39.5 H23.5" stroke="#9a9a60" stroke-width="0.8"/>
<path d="M28 38 L30.5 43 Q35 38.5 42 39.5 Q49 40 55 35 Q56.5 50 50.5 56 Q42 60.5 34.5 58.5 Q28 55 28 47 Z" fill="#797161"/>
<circle cx="23.5" cy="49" r="5.3" fill="#1a1a1a"/><circle cx="22" cy="47" r="2" fill="#d8d8d8"/>
<circle cx="31.6" cy="45.5" r="3.2" fill="#f4f4f4"/><circle cx="32.3" cy="45.8" r="1.6" fill="#111"/>
<circle cx="40.5" cy="45" r="4.2" fill="#f4f4f4"/><circle cx="41.2" cy="46" r="2" fill="#111"/>
<path d="M41.5 53.5 Q44.5 54.5 47 52" stroke="#222" stroke-width="1" fill="none"/>
</svg>
<div id="t30" style="left:158px;top:139px;font-size:13px;line-height:13px;color:#d4d4d4;white-space:pre;font-style:italic;letter-spacing:0.622px;">Render circle wave along path...</div>
<div id="t31" style="left:158px;top:154px;font-size:13px;line-height:13px;color:#d4d4d4;white-space:pre;font-style:italic;letter-spacing:0.546px;">C:\Documents and Settings\Compaq_Owner.FAMILY-ROOM</div>
<div id="t32" style="left:158px;top:169px;font-size:13px;line-height:13px;color:#d4d4d4;white-space:pre;font-style:italic;letter-spacing:0.701px;">\.gimp-2.6\plug-ins\path-waves-0.2.py</div>
<div id="t33" style="left:89px;top:214px;font-size:13px;line-height:13px;color:#dcdcdc;white-space:pre;letter-spacing:0.248px;">Wavelength (pixels):</div>
<div id="t34" style="left:89px;top:250px;font-size:13px;line-height:13px;color:#dcdcdc;white-space:pre;letter-spacing:0.281px;">Amplitude (pixels):</div>
<div id="t35" style="left:89px;top:286px;font-size:13px;line-height:13px;color:#dcdcdc;white-space:pre;letter-spacing:0.360px;">Wavelength shift:</div>
<div id="t36" style="left:89px;top:322px;font-size:13px;line-height:13px;color:#dcdcdc;white-space:pre;letter-spacing:-0.181px;">Asymmetry:</div>
<div id="t37" style="left:89px;top:358px;font-size:13px;line-height:13px;color:#dcdcdc;white-space:pre;letter-spacing:0.287px;">Split top and bottom:</div>
<div style="left:222px;top:205px;width:311px;height:30px;background:linear-gradient(#474747 0,#444 24px,#3a3a3a 24px);border:1px solid #1e4a6e;border-radius:7px;box-sizing:border-box"></div>
<div style="left:516px;top:206px;width:1px;height:28px;background:#2a2a2a"></div>
<svg style="position:absolute;left:518px;top:205px" width="12" height="30"><path d="M2.5 10.5 L6.25 5.0 L10 10.5Z M2.5 17.5 L10 17.5 L6.25 23.0Z" fill="#ddd"/></svg>
<div style="left:226px;top:211px;width:17px;height:18px;background:#1565c8"></div>
<div id="t38" style="left:227px;top:214px;font-size:13px;line-height:13px;color:#ffffff;white-space:pre;letter-spacing:1.531px;">50</div>
<div style="left:222px;top:243px;width:310px;height:27px;background:linear-gradient(#474747 0,#444 21px,#3a3a3a 21px);border:1px solid #2a2a2a;border-radius:7px;box-sizing:border-box"></div>
<div style="left:515px;top:244px;width:1px;height:25px;background:#2a2a2a"></div>
<svg style="position:absolute;left:517px;top:243px" width="12" height="27"><path d="M2.5 9.0 L6.25 3.5 L10 9.0Z M2.5 16.0 L10 16.0 L6.25 21.5Z" fill="#ddd"/></svg>
<div id="t39" style="left:227px;top:250px;font-size:13px;line-height:13px;color:#dcdcdc;white-space:pre;letter-spacing:1.531px;">50</div>
<div style="left:222px;top:279px;width:310px;height:27px;background:linear-gradient(#474747 0,#444 19px,#3a3a3a 19px);border:1px solid #2a2a2a;border-radius:7px;box-sizing:border-box"></div>
<div id="t40" style="left:228px;top:286px;font-size:13px;line-height:13px;color:#dcdcdc;white-space:pre;letter-spacing:-0.026px;">None</div>
<svg style="position:absolute;left:512px;top:287px" width="14" height="12"><path d="M1 1 L13 1 L7 10Z" fill="#ddd"/></svg>
<div style="left:222px;top:315px;width:310px;height:27px;background:linear-gradient(#474747 0,#444 21px,#3a3a3a 21px);border:1px solid #2a2a2a;border-radius:7px;box-sizing:border-box"></div>
<div style="left:515px;top:316px;width:1px;height:25px;background:#2a2a2a"></div>
<svg style="position:absolute;left:517px;top:315px" width="12" height="27"><path d="M2.5 9.0 L6.25 3.5 L10 9.0Z M2.5 16.0 L10 16.0 L6.25 21.5Z" fill="#ddd"/></svg>
<div id="t41" style="left:229px;top:322px;font-size:13px;line-height:13px;color:#dcdcdc;white-space:pre;letter-spacing:0.766px;">0</div>
<div style="left:222px;top:351px;width:310px;height:27px;background:linear-gradient(#474747 0,#444 19px,#3a3a3a 19px);border:1px solid #2a2a2a;border-radius:7px;box-sizing:border-box"></div>
<div id="t42" style="left:367px;top:358px;font-size:13px;line-height:13px;color:#dcdcdc;white-space:pre;letter-spacing:0.375px;">No</div>
<div style="left:84px;top:393px;width:448px;height:26px;background:#2c2c2c"></div>
<div style="left:85px;top:394px;width:446px;height:12px;background:#484848"></div>
<div style="left:85px;top:406px;width:446px;height:3px;background:#3a3a3a"></div>
<div style="left:85px;top:409px;width:446px;height:8px;background:#464646"></div>
<div style="left:84px;top:446px;width:81px;height:30px;background:linear-gradient(#484848 0,#444 22px,#3a3a3a 22px);border:1px solid #2a2a2a;border-radius:7px;box-sizing:border-box"></div>
<svg style="position:absolute;left:99px;top:451px" width="20" height="20"><circle cx="10" cy="10" r="7" fill="none" stroke="#fff" stroke-width="4"/><path d="M5 5 L8 8 M15 5 L12 8 M5 15 L8 12 M15 15 L12 12" stroke="#e82828" stroke-width="3"/><circle cx="10" cy="10" r="3.5" fill="#333"/></svg>
<div id="t43" style="left:121px;top:455px;font-size:13px;line-height:13px;color:#dcdcdc;white-space:pre;letter-spacing:0.417px;">Help</div>
<div style="left:121px;top:468px;width:11px;height:1px;background:#dcdcdc"></div>
<div style="left:358px;top:445px;width:83px;height:30px;background:linear-gradient(#484848 0,#444 22px,#3a3a3a 22px);border:1px solid #1e4a6e;border-radius:7px;box-sizing:border-box"></div>
<svg style="position:absolute;left:379px;top:450px" width="20" height="20"><path d="M12 2 H17 V12 H9 V16 L2 11 L9 6 V9 H12Z" fill="#8ab0e8" stroke="#4a78c0" stroke-width="1"/></svg>
<div id="t44" style="left:399px;top:455px;font-size:13px;line-height:13px;color:#dcdcdc;white-space:pre;letter-spacing:0.203px;">OK</div>
<div style="left:399px;top:468px;width:9px;height:1px;background:#dcdcdc"></div>
<div style="left:450px;top:446px;width:81px;height:30px;background:linear-gradient(#484848 0,#444 22px,#3a3a3a 22px);border:1px solid #2a2a2a;border-radius:7px;box-sizing:border-box"></div>
<svg style="position:absolute;left:461px;top:451px" width="18" height="20"><path d="M3 3 L15 17 M15 3 L3 17" stroke="#e03030" stroke-width="4"/><path d="M3 3 L15 17 M15 3 L3 17" stroke="#f06060" stroke-width="1.5"/></svg>
<div id="t45" style="left:481px;top:455px;font-size:13px;line-height:13px;color:#dcdcdc;white-space:pre;letter-spacing:-0.094px;">Cancel</div>
<div style="left:481px;top:468px;width:8px;height:1px;background:#dcdcdc"></div>
<div style="left:1167px;top:85px;width:258px;height:758px;background:linear-gradient(90deg,#5f70d6 0,#7a8ce6 2px,#6c7cda 4px,#6c7cda 254px,#7a8ce6 256px,#5f70d6 258px)"></div>
<div style="left:1167px;top:85px;width:258px;height:22px;background:linear-gradient(#9fb4f0 0,#7f98e4 3px,#7b93dd 10px,#80a2e6 22px)"></div>
<div style="left:1167px;top:85px;width:2px;height:22px;background:linear-gradient(90deg,#5a68d6,#7288e2)"></div>
<div style="left:1423px;top:85px;width:2px;height:22px;background:linear-gradient(90deg,#7288e2,#5a68d6)"></div>
<div id="t46" style="left:1172px;top:92px;font-size:12px;line-height:12px;color:#e2eaf8;white-space:pre;font-weight:bold;letter-spacing:-0.289px;">Tool Options - Layers, Channels, Paths, ...</div>
<div style="left:1406px;top:91px;width:14px;height:14px;background:#b86e84;border:1px solid #e8dce8;border-radius:2px;box-sizing:border-box"><svg width="12" height="12" style="position:absolute;left:0;top:0"><path d="M3 3 L9 9 M9 3 L3 9" stroke="#fff" stroke-width="2"/></svg></div>
<div style="left:1171px;top:107px;width:250px;height:732px;background:#333"></div>
<div style="left:1171px;top:107px;width:250px;height:5px;background:#262626"></div>
<div style="left:1171px;top:112px;width:250px;height:23px;background:#2f2f2f"></div>
<div id="t47" style="left:1173px;top:120px;font-size:11px;line-height:11px;color:#e0e0e0;white-space:pre;font-weight:bold;letter-spacing:-0.072px;">Ellipse Select</div>
<div style="left:1402px;top:118px;width:11px;height:11px;border:1px solid #222;border-radius:2px;box-sizing:border-box"></div>
<svg style="position:absolute;left:1404px;top:120px" width="8" height="8"><path d="M6 1 L2 4 L6 7Z" fill="#222"/></svg>
<div style="left:1171px;top:135px;width:230px;height:180px;background:#343434"></div>
<div style="left:1401px;top:135px;width:18px;height:180px;background:#2c2c2c"></div>
<div style="left:1409px;top:150px;width:6px;height:160px;background:#282828"></div>
<div style="left:1404px;top:152px;width:14px;height:56px;background:#474747;border-radius:7px;border:1px solid #3a3a3a;box-sizing:border-box"></div>
<div style="left:1407px;top:176px;width:9px;height:1px;background:#2a2a2a"></div>
<div style="left:1407px;top:179px;width:9px;height:1px;background:#2a2a2a"></div>
<div style="left:1407px;top:182px;width:9px;height:1px;background:#2a2a2a"></div>
<svg style="position:absolute;left:1403px;top:138px" width="14" height="175"><path d="M3 10 L7 3 L11 10Z M3 156 L7 149 L11 156Z" fill="#222"/><path d="M3 164 L11 164 L7 171Z" fill="#ddd"/></svg>
<div id="t48" style="left:1172px;top:142px;font-size:12px;line-height:12px;color:#dcdcdc;white-space:pre;letter-spacing:-0.840px;">Mode:</div>
<div style="left:1206px;top:136px;width:26px;height:24px;background:#262626;border-radius:7px"></div>
<svg style="position:absolute;left:1200px;top:130px" width="120" height="32">
<defs><linearGradient id="rg" x1="0" y1="0" x2="1" y2="1"><stop offset="0" stop-color="#f4a0a0"/><stop offset="1" stop-color="#e01818"/></linearGradient>
<linearGradient id="pg" x1="0" y1="0" x2="0" y2="1"><stop offset="0" stop-color="#f4b8b8"/><stop offset="1" stop-color="#e84848"/></linearGradient></defs>
<rect x="12.5" y="11.5" width="13" height="13" fill="url(#rg)" stroke="#333"/><rect x="12.5" y="11.5" width="13" height="13" fill="none" stroke="#fff" stroke-dasharray="1 1" shape-rendering="crispEdges"/>
<rect x="39.5" y="10.5" width="11" height="11" fill="url(#pg)" stroke="#8a8a8a"/>
<rect x="43.5" y="14.5" width="11" height="11" fill="url(#rg)" stroke="#333"/><rect x="43.5" y="14.5" width="11" height="11" fill="none" stroke="#fff" stroke-dasharray="1 1" shape-rendering="crispEdges"/>
<rect x="67.5" y="10.5" width="11" height="11" fill="url(#pg)" stroke="#8a8a8a"/>
<rect x="71.5" y="14.5" width="11" height="11" fill="#fafafa" stroke="#333"/><rect x="71.5" y="14.5" width="11" height="11" fill="none" stroke="#fff" stroke-dasharray="1 1" shape-rendering="crispEdges"/>
<rect x="95.5" y="10.5" width="11" height="11" fill="#fafafa" stroke="#8a8a8a"/>
<rect x="99.5" y="14.5" width="11" height="11" fill="#fafafa" stroke="#333"/><rect x="99.5" y="14.5" width="11" height="11" fill="none" stroke="#fff" stroke-dasharray="1 1" shape-rendering="crispEdges"/>
<rect x="100" y="15" width="7" height="7" fill="url(#rg)"/>
</svg>
<div style="left:1175px;top:170px;width:13px;height:13px;background:linear-gradient(#3a7ae8,#1850c8);border:1px solid #0c3a9a;border-radius:2px;box-sizing:border-box"><svg width="13" height="13" style="position:absolute;left:-1px;top:-1px"><path d="M2.5 6.5 L5 10 L11 2" stroke="#fff" stroke-width="2" fill="none"/></svg></div>
<div id="t49" style="left:1191px;top:171px;font-size:12px;line-height:12px;color:#dcdcdc;white-space:pre;letter-spacing:0.057px;">Antialiasing</div>
<div style="left:1175px;top:195px;width:13px;height:13px;background:#383838;border:1px solid #262626;border-radius:2px;box-sizing:border-box"></div>
<div id="t50" style="left:1191px;top:196px;font-size:12px;line-height:12px;color:#dcdcdc;white-space:pre;letter-spacing:-0.616px;">Feather edges</div>
<div style="left:1175px;top:222px;width:13px;height:13px;background:linear-gradient(#3a7ae8,#1850c8);border:1px solid #0c3a9a;border-radius:2px;box-sizing:border-box"><svg width="13" height="13" style="position:absolute;left:-1px;top:-1px"><path d="M2.5 6.5 L5 10 L11 2" stroke="#fff" stroke-width="2" fill="none"/></svg></div>
<div id="t51" style="left:1191px;top:223px;font-size:12px;line-height:12px;color:#dcdcdc;white-space:pre;letter-spacing:-0.219px;">Expand from center</div>
<div style="left:1175px;top:251px;width:13px;height:13px;background:#383838;border:1px solid #262626;border-radius:2px;box-sizing:border-box"></div>
<div id="t52" style="left:1191px;top:252px;font-size:12px;line-height:12px;color:#dcdcdc;white-space:pre;letter-spacing:-0.338px;">Fixed:</div>
<div style="left:1228px;top:246px;width:172px;height:24px;background:linear-gradient(#474747 0,#444 17px,#3a3a3a 17px);border:1px solid #2a2a2a;border-radius:7px;box-sizing:border-box"></div>
<div id="t53" style="left:1235px;top:252px;font-size:12px;line-height:12px;color:#dcdcdc;white-space:pre;letter-spacing:-0.448px;">Size</div>
<svg style="position:absolute;left:1382px;top:253px" width="14" height="12"><path d="M1 1 L12 1 L6.5 9Z" fill="#ddd"/></svg>
<div style="left:1184px;top:273px;width:160px;height:27px;background:#2e2e2e"></div>
<div style="left:1186px;top:275px;width:156px;height:24px;background:linear-gradient(#474747 0,#444 17px,#3a3a3a 17px);border-radius:7px"></div>
<div id="t54" style="left:1190px;top:282px;font-size:12px;line-height:12px;color:#dcdcdc;white-space:pre;letter-spacing:0.324px;">25x25</div>
<svg style="position:absolute;left:1351px;top:279px" width="48" height="18"><path d="M1.5 1.5 H10 L13.5 5 V16.5 H1.5Z" fill="#fafafa" stroke="#aaa"/><circle cx="7.5" cy="7" r="2.5" fill="#333"/><path d="M3.5 15 Q3.5 10 7.5 10 Q11.5 10 11.5 15Z" fill="#333"/><path d="M29.5 3.5 H44.5 V13.5 H29.5Z" fill="#fafafa" stroke="#aaa"/><path d="M31 12 L36 7 L40 10 L44 8 V12Z" fill="#444"/></svg>
<div style="left:1336px;top:308px;width:64px;height:8px;background:#444;border-radius:7px 7px 0 0"></div>
<div style="left:1171px;top:315px;width:250px;height:2px;background:#2f2f2f"></div>
<svg style="position:absolute;left:1171px;top:316px" width="250" height="30">
<rect x="24.5" y="5.5" width="14" height="14" rx="1" fill="#5878b8" stroke="#2848a0"/><rect x="26" y="6" width="11" height="3" fill="#e83030"/><rect x="27" y="9" width="9" height="4" fill="#fff"/><rect x="28" y="15" width="7" height="5" fill="#ddd"/><rect x="30" y="16" width="2" height="3" fill="#333"/>
<rect x="86.5" y="5.5" width="14" height="14" rx="1" fill="#5878b8" stroke="#2848a0"/><rect x="88" y="6" width="11" height="3" fill="#e83030"/><rect x="89" y="9" width="9" height="4" fill="#fff"/><path d="M88 14 Q90 9 95 11 L95 9 L99 13 L95 17 L95 15 Q91 14 88 17Z" fill="#e8c820" stroke="#806000" stroke-width="0.5"/>
<path d="M149 7 H161 L160 19 H150Z" fill="#a8a8a8" stroke="#666"/><rect x="148" y="5" width="14" height="3" rx="1" fill="#bbb" stroke="#666" stroke-width="0.8"/>
<path d="M214 7 H226 V17 H216" stroke="#e8c820" stroke-width="3" fill="none"/><path d="M220 14 L214 18 L220 21Z" fill="#e8c820"/><circle cx="213" cy="21" r="2.5" fill="#3a6ec8"/>
</svg>
<div style="left:1241px;top:342px;width:100px;height:6px;background:#2c2c2c"></div>
<div style="left:1291px;top:343px;width:1px;height:5px;background:#222"></div>
<div style="left:1293px;top:343px;width:1px;height:5px;background:#222"></div>
<div style="left:1295px;top:343px;width:1px;height:5px;background:#222"></div>
<div style="left:1171px;top:349px;width:250px;height:28px;background:#333"></div>
<div style="left:1173px;top:353px;width:26px;height:23px;background:#2e2e2e;border-radius:3px 3px 0 0"></div>
<div style="left:1200px;top:353px;width:24px;height:23px;background:#2e2e2e;border-radius:3px 3px 0 0"></div>
<div style="left:1225px;top:350px;width:28px;height:27px;background:linear-gradient(#3c3c3c,#363636);border:1px solid #1e4a6e;border-bottom:none;border-radius:3px 3px 0 0;box-sizing:border-box"></div>
<div style="left:1253px;top:353px;width:27px;height:23px;background:#2e2e2e;border-radius:3px 3px 0 0"></div>
<div style="left:1281px;top:353px;width:26px;height:23px;background:#2e2e2e;border-radius:3px 3px 0 0"></div>
<div style="left:1308px;top:353px;width:27px;height:23px;background:#2e2e2e;border-radius:3px 3px 0 0"></div>
<div style="left:1336px;top:353px;width:26px;height:23px;background:#2e2e2e;border-radius:3px 3px 0 0"></div>
<div style="left:1363px;top:353px;width:25px;height:23px;background:#2e2e2e;border-radius:3px 3px 0 0"></div>
<div style="left:1171px;top:375px;width:250px;height:2px;background:#262626"></div>
<svg style="position:absolute;left:1171px;top:350px" width="250" height="28">
<path d="M8 20 L12 14 L27 14 L23 20Z" fill="#ccc" stroke="#999" stroke-width="0.6"/><path d="M8 17 L12 11 L27 11 L23 17Z" fill="#ddd" stroke="#999" stroke-width="0.6"/><path d="M8 14 L12 8 L27 8 L23 14Z" fill="#eee" stroke="#999" stroke-width="0.6"/>
<path d="M34 20 L37 15 L53 15 L50 20Z" fill="#3a6ec8"/><path d="M34 17 L37 12 L53 12 L50 17Z" fill="#30a030"/><path d="M34 14 L37 7 L53 7 L50 14Z" fill="#e02828"/>
<path d="M59 17 Q66 7 72 12 Q76 16 73 22" stroke="#3a6ec8" stroke-width="1.2" fill="none"/><path d="M58 14 L70 6" stroke="#aaa" stroke-width="1"/><circle cx="63" cy="11" r="1.5" fill="#fff"/><circle cx="69" cy="18" r="1.5" fill="#fff"/>
<defs><radialGradient id="mk"><stop offset="0" stop-color="#000"/><stop offset="0.35" stop-color="#111"/><stop offset="1" stop-color="#fff"/></radialGradient></defs><rect x="84.5" y="4.5" width="16" height="16" fill="#fff" stroke="#111"/><circle cx="92.5" cy="12.5" r="7" fill="url(#mk)"/><path d="M96.5 18.5 H101.5 M99 16 V21" stroke="#1e3a80" stroke-width="1.5"/>
<rect x="112.5" y="4.5" width="16" height="16" fill="#c87030" stroke="#111"/><path d="M113 10 Q120 8 128 11 V15 Q120 12 113 15Z" fill="#e89858"/>
<defs><linearGradient id="gg" x1="0" x2="1"><stop offset="0" stop-color="#000"/><stop offset="1" stop-color="#fff"/></linearGradient></defs><rect x="140.5" y="4.5" width="16" height="16" fill="url(#gg)" stroke="#111"/>
<path d="M168 12 L173 6 V9 Q180 9 181 18 Q177 13 173 14 V17Z" fill="#e8c820" stroke="#806000" stroke-width="0.6"/><path d="M174 12 L178 7 V10 Q185 10 186 18 Q182 14 178 15 V17Z" fill="#8a8a60" opacity="0.8"/>
<path d="M202 5 L211 20 H193Z" fill="#fff" stroke="#d82020" stroke-width="2.2" stroke-linejoin="round"/><rect x="201" y="9" width="2" height="6" fill="#111"/><rect x="201" y="16" width="2" height="2" fill="#111"/>
</svg>
<div id="t55" style="left:1175px;top:385px;font-size:11px;line-height:11px;color:#e0e0e0;white-space:pre;font-weight:bold;letter-spacing:0.508px;">Paths</div>
<div style="left:1399px;top:383px;width:11px;height:11px;border:1px solid #222;border-radius:2px;box-sizing:border-box"></div>
<svg style="position:absolute;left:1401px;top:385px" width="8" height="8"><path d="M6 1 L2 4 L6 7Z" fill="#222"/></svg>
<div style="left:1175px;top:400px;width:242px;height:383px;background:#2a2a2a"></div>
<div style="left:1176px;top:401px;width:240px;height:382px;background:#474747"></div>
<div style="left:1176px;top:401px;width:240px;height:46px;background:#2b2b2b"></div>
<svg style="position:absolute;left:1180px;top:417px" width="22" height="14"><path d="M1 7 Q11 -1 21 7 Q11 15 1 7Z" fill="#f0f0f0" stroke="#aaa" stroke-width="0.6"/><circle cx="11" cy="7" r="4" fill="#3a60c0"/><circle cx="11" cy="7" r="1.8" fill="#111"/><circle cx="10" cy="5.5" r="1" fill="#fff"/></svg>
<div style="left:1176px;top:401px;width:240px;height:382px;overflow:hidden">
<div style="left:62px;top:2px;width:66px;height:42px;background:#fff;border:1px solid #111;box-sizing:border-box"></div>
<div style="left:132px;top:17px;font-size:12px;line-height:12px;color:#b8b8b8;white-space:pre">Selection: Circle(50,</div>
<div style="left:62px;top:48px;width:66px;height:42px;background:#fff;border:1px solid #111;box-sizing:border-box"></div>
<div style="left:132px;top:63px;font-size:12px;line-height:12px;color:#dcdcdc;white-space:pre">Selection</div>
<div style="left:62px;top:94px;width:66px;height:42px;background:#fff;border:1px solid #111;box-sizing:border-box"></div>
<div style="left:132px;top:109px;font-size:12px;line-height:12px;color:#dcdcdc;white-space:pre">Golden Spiral: Circle</div>
<div style="left:62px;top:140px;width:66px;height:42px;background:#fff;border:1px solid #111;box-sizing:border-box"></div>
<div style="left:132px;top:155px;font-size:12px;line-height:12px;color:#dcdcdc;white-space:pre">Golden Spiral mirrore</div>
<div style="left:62px;top:186px;width:66px;height:42px;background:#fff;border:1px solid #111;box-sizing:border-box"></div>
<div style="left:132px;top:201px;font-size:12px;line-height:12px;color:#dcdcdc;white-space:pre">Golden Spiral</div>
<div style="left:62px;top:232px;width:66px;height:42px;background:#fff;border:1px solid #111;box-sizing:border-box"></div>
<div style="left:132px;top:247px;font-size:12px;line-height:12px;color:#dcdcdc;white-space:pre">Golden Spiral mirrore</div>
</div>
<svg style="position:absolute;left:1238px;top:403px" width="66" height="276"><path d="M29.44 9.24 A1.31 1.31 0 0 1 32.05 9.00 A1.31 1.31 0 0 0 34.65 9.35 A1.31 1.31 0 0 1 37.10 10.27 A1.31 1.31 0 0 0 39.29 11.71 A1.31 1.31 0 0 1 41.10 13.60 A1.31 1.31 0 0 0 42.45 15.85 A1.31 1.31 0 0 1 43.26 18.34 A1.31 1.31 0 0 0 43.50 20.95 A1.31 1.31 0 0 1 43.15 23.55 A1.31 1.31 0 0 0 42.23 26.00 A1.31 1.31 0 0 1 40.79 28.19 A1.31 1.31 0 0 0 38.90 30.00 A1.31 1.31 0 0 1 36.65 31.35 A1.31 1.31 0 0 0 34.16 32.16 A1.31 1.31 0 0 1 31.55 32.40 A1.31 1.31 0 0 0 28.95 32.05 A1.31 1.31 0 0 1 26.50 31.13 A1.31 1.31 0 0 0 24.31 29.69 A1.31 1.31 0 0 1 22.50 27.80 A1.31 1.31 0 0 0 21.15 25.55 A1.31 1.31 0 0 1 20.34 23.06 A1.31 1.31 0 0 0 20.10 20.45 A1.31 1.31 0 0 1 20.45 17.85 A1.31 1.31 0 0 0 21.37 15.40 A1.31 1.31 0 0 1 22.81 13.21 A1.31 1.31 0 0 0 24.70 11.40 A1.31 1.31 0 0 1 26.95 10.05 A1.31 1.31 0 0 0 29.44 9.24 Z" fill="none" stroke="#666" stroke-width="0.9"/><circle cx="31.7" cy="66.6" r="11.8" fill="none" stroke="#666" stroke-width="0.9"/><path d="M21.89 112.18 L21.74 112.20 L21.59 112.21 L21.44 112.22 L21.29 112.22 L21.15 112.22 L21.02 112.21 L20.90 112.21 L20.79 112.21 L20.68 112.21 L20.59 112.21 L20.51 112.22 L20.44 112.23 L20.38 112.25 L20.33 112.28 L20.30 112.32 L20.27 112.37 L20.26 112.43 L20.25 112.50 L20.25 112.59 L20.26 112.69 L20.28 112.80 L20.30 112.92 L20.32 113.06 L20.34 113.21 L20.37 113.37 L20.39 113.53 L20.40 113.71 L20.41 113.89 L20.41 114.07 L20.41 114.25 L20.39 114.43 L20.36 114.61 L20.33 114.78 L20.28 114.94 L20.22 115.09 L20.14 115.23 L20.06 115.34 L19.97 115.44 L19.86 115.52 L19.75 115.57 L19.63 115.61 L19.50 115.61 L19.37 115.60 L19.23 115.56 L19.10 115.49 L18.96 115.40 L18.83 115.29 L18.70 115.16 L18.57 115.02 L18.45 114.86 L18.34 114.69 L18.23 114.51 L18.13 114.32 L18.04 114.14 L17.96 113.96 L17.89 113.79 L17.82 113.63 L17.75 113.48 L17.69 113.36 L17.62 113.25 L17.56 113.16 L17.49 113.10 L17.42 113.07 L17.34 113.06 L17.25 113.08 L17.15 113.12 L17.04 113.18 L16.91 113.26 L16.77 113.36 L16.62 113.48 L16.45 113.60 L16.27 113.73 L16.08 113.86 L15.88 113.98 L15.68 114.09 L15.47 114.20 L15.26 114.28 L15.05 114.34 L14.86 114.38 L14.67 114.39 L14.50 114.37 L14.35 114.31 L14.22 114.23 L14.12 114.12 L14.05 113.98 L14.00 113.81 L13.98 113.62 L13.99 113.41 L14.03 113.18 L14.09 112.95 L14.17 112.71 L14.27 112.46 L14.37 112.23 L14.48 112.00 L14.60 111.78 L14.70 111.58 L14.79 111.40 L14.85 111.23 L14.89 111.09 L14.90 110.97 L14.87 110.86 L14.81 110.78 L14.70 110.70 L14.56 110.64 L14.38 110.59 L14.17 110.54 L13.93 110.48 L13.67 110.43 L13.39 110.36 L13.12 110.28 L12.84 110.19 L12.59 110.09 L12.35 109.96 L12.15 109.83 L12.00 109.68 L11.89 109.51 L11.83 109.34 L11.84 109.16 L11.90 108.98 L12.01 108.80 L12.18 108.63 L12.39 108.46 L12.64 108.31 L12.91 108.17 L13.20 108.04 L13.49 107.92 L13.76 107.81 L14.02 107.71 L14.24 107.61 L14.42 107.51 L14.54 107.41 L14.61 107.29 L14.62 107.16 L14.58 107.00 L14.49 106.83 L14.35 106.62 L14.17 106.39 L13.98 106.14 L13.78 105.88 L13.58 105.59 L13.41 105.31 L13.27 105.02 L13.18 104.75 L13.14 104.50 L13.17 104.28 L13.26 104.10 L13.42 103.96 L13.64 103.86 L13.91 103.82 L14.22 103.82 L14.57 103.85 L14.93 103.92 L15.28 104.00 L15.63 104.09 L15.94 104.17 L16.21 104.22 L16.44 104.23 L16.62 104.19 L16.74 104.09 L16.81 103.92 L16.84 103.69 L16.84 103.40 L16.82 103.06 L16.80 102.68 L16.78 102.29 L16.78 101.89 L16.82 101.53 L16.90 101.21 L17.02 100.96 L17.20 100.79 L17.41 100.71 L17.67 100.72 L17.95 100.82 L18.26 101.01 L18.57 101.25 L18.88 101.54 L19.18 101.83 L19.46 102.10 L19.71 102.33 L19.93 102.49 L20.13 102.55 L20.31 102.52 L20.48 102.37 L20.65 102.13 L20.82 101.81 L21.00 101.43 L21.19 101.04 L21.41 100.65 L21.65 100.31 L21.90 100.05 L22.16 99.90 L22.42 99.87 L22.67 99.97 L22.90 100.19 L23.11 100.52 L23.29 100.93 L23.45 101.38 L23.59 101.82 L23.73 102.22 L23.87 102.54 L24.03 102.75 L24.23 102.84 L24.47 102.80 L24.75 102.64 L25.09 102.40 L25.46 102.10 L25.86 101.80 L26.27 101.54 L26.66 101.35 L27.00 101.28 L27.29 101.35 L27.50 101.56 L27.62 101.90 L27.67 102.34 L27.65 102.84 L27.60 103.37 L27.54 103.87 L27.52 104.29 L27.57 104.61 L27.71 104.81 L27.97 104.89 L28.33 104.85 L28.79 104.75 L29.31 104.61 L29.85 104.49 L30.36 104.42 L30.78 104.46 L31.09 104.61 L31.24 104.88 L31.24 105.26 L31.10 105.73 L30.87 106.24 L30.60 106.75 L30.35 107.22 L30.19 107.62 L30.18 107.93 L30.34 108.14 L30.68 108.28 L31.17 108.36 L31.75 108.43 L32.35 108.51 L32.89 108.65 L33.28 108.86 L33.48 109.15 L33.46 109.50 L33.23 109.91 L32.84 110.34 L32.38 110.77 L31.93 111.17 L31.60 111.53 L31.45 111.85 L31.54 112.13 L31.86 112.40 L32.35 112.66 L32.93 112.95 L33.50 113.26 L33.94 113.60 L34.15 113.96 L34.10 114.32 L33.79 114.67 L33.27 114.98 L32.65 115.27 L32.05 115.53 L31.59 115.79 L31.36 116.07 L31.41 116.40 L31.70 116.80 L32.17 117.26 L32.67 117.76 L33.09 118.26 L33.30 118.73 L33.22 119.11 L32.84 119.38 L32.24 119.55 L31.51 119.65 L30.81 119.73 L30.27 119.86 L29.98 120.10 L29.99 120.50 L30.22 121.04 L30.59 121.68 L30.93 122.35 L31.11 122.95 L31.02 123.39 L30.64 123.62 L30.01 123.66 L29.24 123.56 L28.49 123.43 L27.88 123.40 L27.53 123.58 L27.44 124.01 L27.56 124.67 L27.75 125.46 L27.88 126.22 L27.82 126.81 L27.49 127.10 L26.92 127.09 L26.18 126.83 L25.42 126.48 L24.75 126.24" fill="none" stroke="#666" stroke-width="0.9"/><path d="M41.11 158.18 L41.14 158.25 L41.17 158.32 L41.20 158.39 L41.24 158.46 L41.27 158.53 L41.31 158.60 L41.35 158.66 L41.39 158.73 L41.44 158.80 L41.48 158.86 L41.53 158.93 L41.58 158.99 L41.63 159.06 L41.68 159.12 L41.73 159.18 L41.79 159.24 L41.85 159.30 L41.91 159.36 L41.97 159.42 L42.03 159.48 L42.09 159.53 L42.16 159.59 L42.23 159.64 L42.30 159.69 L42.37 159.75 L42.44 159.80 L42.51 159.84 L42.59 159.89 L42.66 159.94 L42.74 159.98 L42.82 160.02 L42.90 160.06 L42.99 160.10 L43.07 160.14 L43.15 160.17 L43.24 160.21 L43.33 160.24 L43.42 160.27 L43.51 160.30 L43.60 160.32 L43.69 160.35 L43.78 160.37 L43.88 160.39 L43.97 160.41 L44.07 160.43 L44.17 160.44 L44.27 160.45 L44.36 160.46 L44.46 160.47 L44.56 160.48 L44.67 160.48 L44.77 160.48 L44.87 160.48 L44.97 160.47 L45.08 160.47 L45.18 160.46 L45.28 160.45 L45.39 160.43 L45.49 160.42 L45.60 160.40 L45.70 160.38 L45.81 160.35 L45.91 160.33 L46.02 160.30 L46.12 160.27 L46.23 160.23 L46.33 160.19 L46.44 160.16 L46.54 160.11 L46.64 160.07 L46.75 160.02 L46.85 159.97 L46.95 159.92 L47.05 159.86 L47.15 159.81 L47.25 159.75 L47.35 159.68 L47.45 159.62 L47.55 159.55 L47.64 159.48 L47.74 159.41 L47.83 159.33 L47.92 159.25 L48.01 159.17 L48.10 159.09 L48.19 159.00 L48.28 158.91 L48.36 158.82 L48.45 158.73 L48.53 158.63 L48.61 158.53 L48.69 158.43 L48.77 158.33 L48.84 158.22 L48.91 158.11 L48.98 158.00 L49.05 157.89 L49.12 157.77 L49.18 157.66 L49.24 157.54 L49.30 157.42 L49.36 157.29 L49.41 157.17 L49.46 157.04 L49.51 156.91 L49.56 156.78 L49.60 156.65 L49.64 156.52 L49.68 156.38 L49.71 156.24 L49.75 156.10 L49.77 155.96 L49.80 155.82 L49.82 155.68 L49.84 155.53 L49.86 155.39 L49.87 155.24 L49.88 155.09 L49.89 154.94 L49.89 154.79 L49.89 154.64 L49.88 154.49 L49.88 154.34 L49.86 154.19 L49.85 154.03 L49.83 153.88 L49.81 153.72 L49.78 153.57 L49.75 153.41 L49.72 153.26 L49.68 153.10 L49.64 152.95 L49.60 152.79 L49.55 152.64 L49.50 152.48 L49.44 152.33 L49.38 152.17 L49.31 152.02 L49.25 151.86 L49.17 151.71 L49.10 151.56 L49.02 151.41 L48.94 151.26 L48.85 151.11 L48.76 150.97 L48.66 150.82 L48.56 150.68 L48.46 150.53 L48.35 150.39 L48.24 150.25 L48.13 150.11 L48.01 149.98 L47.89 149.84 L47.76 149.71 L47.63 149.58 L47.50 149.45 L47.36 149.33 L47.22 149.21 L47.08 149.09 L46.93 148.97 L46.78 148.85 L46.62 148.74 L46.46 148.63 L46.30 148.53 L46.14 148.42 L45.97 148.33 L45.80 148.23 L45.62 148.14 L45.44 148.05 L45.26 147.96 L45.08 147.88 L44.89 147.80 L44.70 147.73 L44.51 147.66 L44.32 147.59 L44.12 147.53 L43.92 147.47 L43.72 147.42 L43.51 147.37 L43.30 147.32 L43.10 147.28 L42.88 147.25 L42.67 147.22 L42.46 147.19 L42.24 147.17 L42.02 147.15 L41.80 147.14 L41.58 147.14 L41.36 147.14 L41.13 147.14 L40.91 147.15 L40.68 147.16 L40.45 147.18 L40.22 147.21 L40.00 147.24 L39.77 147.27 L39.54 147.31 L39.31 147.36 L39.08 147.41 L38.85 147.47 L38.62 147.53 L38.39 147.60 L38.16 147.68 L37.93 147.76 L37.70 147.85 L37.47 147.94 L37.24 148.03 L37.02 148.14 L36.79 148.25 L36.57 148.36 L36.35 148.48 L36.13 148.61 L35.91 148.74 L35.69 148.88 L35.47 149.03 L35.26 149.18 L35.05 149.33 L34.84 149.49 L34.64 149.66 L34.43 149.83 L34.23 150.01 L34.04 150.19 L33.84 150.38 L33.65 150.58 L33.47 150.78 L33.28 150.98 L33.10 151.19 L32.93 151.41 L32.76 151.63 L32.59 151.86 L32.42 152.09 L32.27 152.33 L32.11 152.57 L31.96 152.82 L31.82 153.07 L31.68 153.33 L31.54 153.59 L31.41 153.85 L31.29 154.12 L31.17 154.40 L31.06 154.67 L30.95 154.96 L30.85 155.24 L30.76 155.53 L30.67 155.83 L30.58 156.13 L30.51 156.43 L30.44 156.73 L30.38 157.04 L30.32 157.35 L30.27 157.67 L30.23 157.98 L30.19 158.30 L30.17 158.63 L30.15 158.95 L30.13 159.28 L30.13 159.61 L30.13 159.94 L30.14 160.27 L30.16 160.61 L30.18 160.94 L30.21 161.28 L30.25 161.62 L30.30 161.96 L30.36 162.30 L30.43 162.64 L30.50 162.98 L30.58 163.32 L30.67 163.66 L30.77 164.00 L30.88 164.34 L30.99 164.68 L31.11 165.02 L31.25 165.36 L31.39 165.70 L31.54 166.03 L31.69 166.37 L31.86 166.70 L32.04 167.03 L32.22 167.36 L32.41 167.68 L32.61 168.00 L32.82 168.32 L33.04 168.64 L33.26 168.96 L33.50 169.27 L33.74 169.57 L33.99 169.87 L34.25 170.17 L34.52 170.47 L34.80 170.76 L35.08 171.04 L35.37 171.32 L35.68 171.59 L35.98 171.86 L36.30 172.13 L36.63 172.38 L36.96 172.64 L37.30 172.88 L37.64 173.12" fill="none" stroke="#666" stroke-width="0.9"/><path d="M21.89 204.18 L21.86 204.25 L21.83 204.32 L21.80 204.39 L21.76 204.46 L21.73 204.53 L21.69 204.60 L21.65 204.66 L21.61 204.73 L21.56 204.80 L21.52 204.86 L21.47 204.93 L21.42 204.99 L21.37 205.06 L21.32 205.12 L21.27 205.18 L21.21 205.24 L21.15 205.30 L21.09 205.36 L21.03 205.42 L20.97 205.48 L20.91 205.53 L20.84 205.59 L20.77 205.64 L20.70 205.69 L20.63 205.75 L20.56 205.80 L20.49 205.84 L20.41 205.89 L20.34 205.94 L20.26 205.98 L20.18 206.02 L20.10 206.06 L20.01 206.10 L19.93 206.14 L19.85 206.17 L19.76 206.21 L19.67 206.24 L19.58 206.27 L19.49 206.30 L19.40 206.32 L19.31 206.35 L19.22 206.37 L19.12 206.39 L19.03 206.41 L18.93 206.43 L18.83 206.44 L18.73 206.45 L18.64 206.46 L18.54 206.47 L18.44 206.48 L18.33 206.48 L18.23 206.48 L18.13 206.48 L18.03 206.47 L17.92 206.47 L17.82 206.46 L17.72 206.45 L17.61 206.43 L17.51 206.42 L17.40 206.40 L17.30 206.38 L17.19 206.35 L17.09 206.33 L16.98 206.30 L16.88 206.27 L16.77 206.23 L16.67 206.19 L16.56 206.16 L16.46 206.11 L16.36 206.07 L16.25 206.02 L16.15 205.97 L16.05 205.92 L15.95 205.86 L15.85 205.81 L15.75 205.75 L15.65 205.68 L15.55 205.62 L15.45 205.55 L15.36 205.48 L15.26 205.41 L15.17 205.33 L15.08 205.25 L14.99 205.17 L14.90 205.09 L14.81 205.00 L14.72 204.91 L14.64 204.82 L14.55 204.73 L14.47 204.63 L14.39 204.53 L14.31 204.43 L14.23 204.33 L14.16 204.22 L14.09 204.11 L14.02 204.00 L13.95 203.89 L13.88 203.77 L13.82 203.66 L13.76 203.54 L13.70 203.42 L13.64 203.29 L13.59 203.17 L13.54 203.04 L13.49 202.91 L13.44 202.78 L13.40 202.65 L13.36 202.52 L13.32 202.38 L13.29 202.24 L13.25 202.10 L13.23 201.96 L13.20 201.82 L13.18 201.68 L13.16 201.53 L13.14 201.39 L13.13 201.24 L13.12 201.09 L13.11 200.94 L13.11 200.79 L13.11 200.64 L13.12 200.49 L13.12 200.34 L13.14 200.19 L13.15 200.03 L13.17 199.88 L13.19 199.72 L13.22 199.57 L13.25 199.41 L13.28 199.26 L13.32 199.10 L13.36 198.95 L13.40 198.79 L13.45 198.64 L13.50 198.48 L13.56 198.33 L13.62 198.17 L13.69 198.02 L13.75 197.86 L13.83 197.71 L13.90 197.56 L13.98 197.41 L14.06 197.26 L14.15 197.11 L14.24 196.97 L14.34 196.82 L14.44 196.68 L14.54 196.53 L14.65 196.39 L14.76 196.25 L14.87 196.11 L14.99 195.98 L15.11 195.84 L15.24 195.71 L15.37 195.58 L15.50 195.45 L15.64 195.33 L15.78 195.21 L15.92 195.09 L16.07 194.97 L16.22 194.85 L16.38 194.74 L16.54 194.63 L16.70 194.53 L16.86 194.42 L17.03 194.33 L17.20 194.23 L17.38 194.14 L17.56 194.05 L17.74 193.96 L17.92 193.88 L18.11 193.80 L18.30 193.73 L18.49 193.66 L18.68 193.59 L18.88 193.53 L19.08 193.47 L19.28 193.42 L19.49 193.37 L19.70 193.32 L19.90 193.28 L20.12 193.25 L20.33 193.22 L20.54 193.19 L20.76 193.17 L20.98 193.15 L21.20 193.14 L21.42 193.14 L21.64 193.14 L21.87 193.14 L22.09 193.15 L22.32 193.16 L22.55 193.18 L22.78 193.21 L23.00 193.24 L23.23 193.27 L23.46 193.31 L23.69 193.36 L23.92 193.41 L24.15 193.47 L24.38 193.53 L24.61 193.60 L24.84 193.68 L25.07 193.76 L25.30 193.85 L25.53 193.94 L25.76 194.03 L25.98 194.14 L26.21 194.25 L26.43 194.36 L26.65 194.48 L26.87 194.61 L27.09 194.74 L27.31 194.88 L27.53 195.03 L27.74 195.18 L27.95 195.33 L28.16 195.49 L28.36 195.66 L28.57 195.83 L28.77 196.01 L28.96 196.19 L29.16 196.38 L29.35 196.58 L29.53 196.78 L29.72 196.98 L29.90 197.19 L30.07 197.41 L30.24 197.63 L30.41 197.86 L30.58 198.09 L30.73 198.33 L30.89 198.57 L31.04 198.82 L31.18 199.07 L31.32 199.33 L31.46 199.59 L31.59 199.85 L31.71 200.12 L31.83 200.40 L31.94 200.67 L32.05 200.96 L32.15 201.24 L32.24 201.53 L32.33 201.83 L32.42 202.13 L32.49 202.43 L32.56 202.73 L32.62 203.04 L32.68 203.35 L32.73 203.67 L32.77 203.98 L32.81 204.30 L32.83 204.63 L32.85 204.95 L32.87 205.28 L32.87 205.61 L32.87 205.94 L32.86 206.27 L32.84 206.61 L32.82 206.94 L32.79 207.28 L32.75 207.62 L32.70 207.96 L32.64 208.30 L32.57 208.64 L32.50 208.98 L32.42 209.32 L32.33 209.66 L32.23 210.00 L32.12 210.34 L32.01 210.68 L31.89 211.02 L31.75 211.36 L31.61 211.70 L31.46 212.03 L31.31 212.37 L31.14 212.70 L30.96 213.03 L30.78 213.36 L30.59 213.68 L30.39 214.00 L30.18 214.32 L29.96 214.64 L29.74 214.96 L29.50 215.27 L29.26 215.57 L29.01 215.87 L28.75 216.17 L28.48 216.47 L28.20 216.76 L27.92 217.04 L27.63 217.32 L27.32 217.59 L27.02 217.86 L26.70 218.13 L26.37 218.38 L26.04 218.64 L25.70 218.88 L25.36 219.12" fill="none" stroke="#666" stroke-width="0.9"/><path d="M41.11 250.18 L41.26 250.20 L41.41 250.21 L41.56 250.22 L41.71 250.22 L41.85 250.22 L41.98 250.21 L42.10 250.21 L42.21 250.21 L42.32 250.21 L42.41 250.21 L42.49 250.22 L42.56 250.23 L42.62 250.25 L42.67 250.28 L42.70 250.32 L42.73 250.37 L42.74 250.43 L42.75 250.50 L42.75 250.59 L42.74 250.69 L42.72 250.80 L42.70 250.92 L42.68 251.06 L42.66 251.21 L42.63 251.37 L42.61 251.53 L42.60 251.71 L42.59 251.89 L42.59 252.07 L42.59 252.25 L42.61 252.43 L42.64 252.61 L42.67 252.78 L42.72 252.94 L42.78 253.09 L42.86 253.23 L42.94 253.34 L43.03 253.44 L43.14 253.52 L43.25 253.57 L43.37 253.61 L43.50 253.61 L43.63 253.60 L43.77 253.56 L43.90 253.49 L44.04 253.40 L44.17 253.29 L44.30 253.16 L44.43 253.02 L44.55 252.86 L44.66 252.69 L44.77 252.51 L44.87 252.32 L44.96 252.14 L45.04 251.96 L45.11 251.79 L45.18 251.63 L45.25 251.48 L45.31 251.36 L45.38 251.25 L45.44 251.16 L45.51 251.10 L45.58 251.07 L45.66 251.06 L45.75 251.08 L45.85 251.12 L45.96 251.18 L46.09 251.26 L46.23 251.36 L46.38 251.48 L46.55 251.60 L46.73 251.73 L46.92 251.86 L47.12 251.98 L47.32 252.09 L47.53 252.20 L47.74 252.28 L47.95 252.34 L48.14 252.38 L48.33 252.39 L48.50 252.37 L48.65 252.31 L48.78 252.23 L48.88 252.12 L48.95 251.98 L49.00 251.81 L49.02 251.62 L49.01 251.41 L48.97 251.18 L48.91 250.95 L48.83 250.71 L48.73 250.46 L48.63 250.23 L48.52 250.00 L48.40 249.78 L48.30 249.58 L48.21 249.40 L48.15 249.23 L48.11 249.09 L48.10 248.97 L48.13 248.86 L48.19 248.78 L48.30 248.70 L48.44 248.64 L48.62 248.59 L48.83 248.54 L49.07 248.48 L49.33 248.43 L49.61 248.36 L49.88 248.28 L50.16 248.19 L50.41 248.09 L50.65 247.96 L50.85 247.83 L51.00 247.68 L51.11 247.51 L51.17 247.34 L51.16 247.16 L51.10 246.98 L50.99 246.80 L50.82 246.63 L50.61 246.46 L50.36 246.31 L50.09 246.17 L49.80 246.04 L49.51 245.92 L49.24 245.81 L48.98 245.71 L48.76 245.61 L48.58 245.51 L48.46 245.41 L48.39 245.29 L48.38 245.16 L48.42 245.00 L48.51 244.83 L48.65 244.62 L48.83 244.39 L49.02 244.14 L49.22 243.88 L49.42 243.59 L49.59 243.31 L49.73 243.02 L49.82 242.75 L49.86 242.50 L49.83 242.28 L49.74 242.10 L49.58 241.96 L49.36 241.86 L49.09 241.82 L48.78 241.82 L48.43 241.85 L48.07 241.92 L47.72 242.00 L47.37 242.09 L47.06 242.17 L46.79 242.22 L46.56 242.23 L46.38 242.19 L46.26 242.09 L46.19 241.92 L46.16 241.69 L46.16 241.40 L46.18 241.06 L46.20 240.68 L46.22 240.29 L46.22 239.89 L46.18 239.53 L46.10 239.21 L45.98 238.96 L45.80 238.79 L45.59 238.71 L45.33 238.72 L45.05 238.82 L44.74 239.01 L44.43 239.25 L44.12 239.54 L43.82 239.83 L43.54 240.10 L43.29 240.33 L43.07 240.49 L42.87 240.55 L42.69 240.52 L42.52 240.37 L42.35 240.13 L42.18 239.81 L42.00 239.43 L41.81 239.04 L41.59 238.65 L41.35 238.31 L41.10 238.05 L40.84 237.90 L40.58 237.87 L40.33 237.97 L40.10 238.19 L39.89 238.52 L39.71 238.93 L39.55 239.38 L39.41 239.82 L39.27 240.22 L39.13 240.54 L38.97 240.75 L38.77 240.84 L38.53 240.80 L38.25 240.64 L37.91 240.40 L37.54 240.10 L37.14 239.80 L36.73 239.54 L36.34 239.35 L36.00 239.28 L35.71 239.35 L35.50 239.56 L35.38 239.90 L35.33 240.34 L35.35 240.84 L35.40 241.37 L35.46 241.87 L35.48 242.29 L35.43 242.61 L35.29 242.81 L35.03 242.89 L34.67 242.85 L34.21 242.75 L33.69 242.61 L33.15 242.49 L32.64 242.42 L32.22 242.46 L31.91 242.61 L31.76 242.88 L31.76 243.26 L31.90 243.73 L32.13 244.24 L32.40 244.75 L32.65 245.22 L32.81 245.62 L32.82 245.93 L32.66 246.14 L32.32 246.28 L31.83 246.36 L31.25 246.43 L30.65 246.51 L30.11 246.65 L29.72 246.86 L29.52 247.15 L29.54 247.50 L29.77 247.91 L30.16 248.34 L30.62 248.77 L31.07 249.17 L31.40 249.53 L31.55 249.85 L31.46 250.13 L31.14 250.40 L30.65 250.66 L30.07 250.95 L29.50 251.26 L29.06 251.60 L28.85 251.96 L28.90 252.32 L29.21 252.67 L29.73 252.98 L30.35 253.27 L30.95 253.53 L31.41 253.79 L31.64 254.07 L31.59 254.40 L31.30 254.80 L30.83 255.26 L30.33 255.76 L29.91 256.26 L29.70 256.73 L29.78 257.11 L30.16 257.38 L30.76 257.55 L31.49 257.65 L32.19 257.73 L32.73 257.86 L33.02 258.10 L33.01 258.50 L32.78 259.04 L32.41 259.68 L32.07 260.35 L31.89 260.95 L31.98 261.39 L32.36 261.62 L32.99 261.66 L33.76 261.56 L34.51 261.43 L35.12 261.40 L35.47 261.58 L35.56 262.01 L35.44 262.67 L35.25 263.46 L35.12 264.22 L35.18 264.81 L35.51 265.10 L36.08 265.09 L36.82 264.83 L37.58 264.48 L38.25 264.24" fill="none" stroke="#666" stroke-width="0.9"/></svg>
<div style="left:1175px;top:783px;width:242px;height:19px;background:#2e2e2e"></div>
<div style="left:1176px;top:784px;width:240px;height:17px;background:#2a2a2a"></div>
<div style="left:1194px;top:786px;width:101px;height:15px;background:#474747;border-radius:7px"></div>
<div style="left:1240px;top:790px;width:1px;height:8px;background:#222"></div>
<div style="left:1243px;top:790px;width:1px;height:8px;background:#222"></div>
<div style="left:1246px;top:790px;width:1px;height:8px;background:#222"></div>
<svg style="position:absolute;left:1178px;top:787px" width="240" height="12"><path d="M9 2 L3 6 L9 10Z M215 2 L209 6 L215 10Z" fill="#222"/><path d="M226 2 L232 6 L226 10Z" fill="#ddd"/></svg>
<svg style="position:absolute;left:1171px;top:804px" width="250" height="30">
<path d="M11.5 5.5 H20 L24.5 10 V20.5 H11.5Z" fill="#f4f4f4" stroke="#ccc"/>
<path d="M47 21 V13 H42 L48 6 L54 13 H50 V21Z" fill="#555"/>
<path d="M75 5 V13 H70 L77 21 L84 13 H79 V5Z" fill="#60c020" stroke="#308010" stroke-width="0.6"/>
<rect x="100.5" y="5.5" width="11" height="10" fill="#2a4a80" stroke="#fff"/><rect x="104.5" y="10.5" width="11" height="10" fill="#2a4a80" stroke="#fff"/>
<rect x="131.5" y="6.5" width="13" height="13" fill="#e84040" stroke="#333"/><rect x="131.5" y="6.5" width="13" height="13" fill="none" stroke="#fff" stroke-dasharray="1 1" shape-rendering="crispEdges"/>
<path d="M162 8 Q169 5 175 8 Q177 13 175 19 Q169 22 162 19 Q160 13 162 8Z" fill="#555"/>
<path d="M192 19 A6 6 0 1 1 198 8" stroke="#3a6ec8" stroke-width="1.5" fill="none" stroke-dasharray="3 1"/><path d="M206 3 L198 17" stroke="#ddd" stroke-width="3"/><path d="M198 16 L195 21 L200 19Z" fill="#111"/><path d="M205 3 L207 1 L207 6Z" fill="#e8a020"/>
<path d="M226 8 H238 L237 21 H227Z" fill="#a8a8a8" stroke="#666"/><rect x="225" y="5" width="14" height="4" rx="1.5" fill="#bbb" stroke="#666" stroke-width="0.8"/>
</svg>
<div style="left:1171px;top:834px;width:250px;height:5px;background:#262626"></div>
</body></html>
